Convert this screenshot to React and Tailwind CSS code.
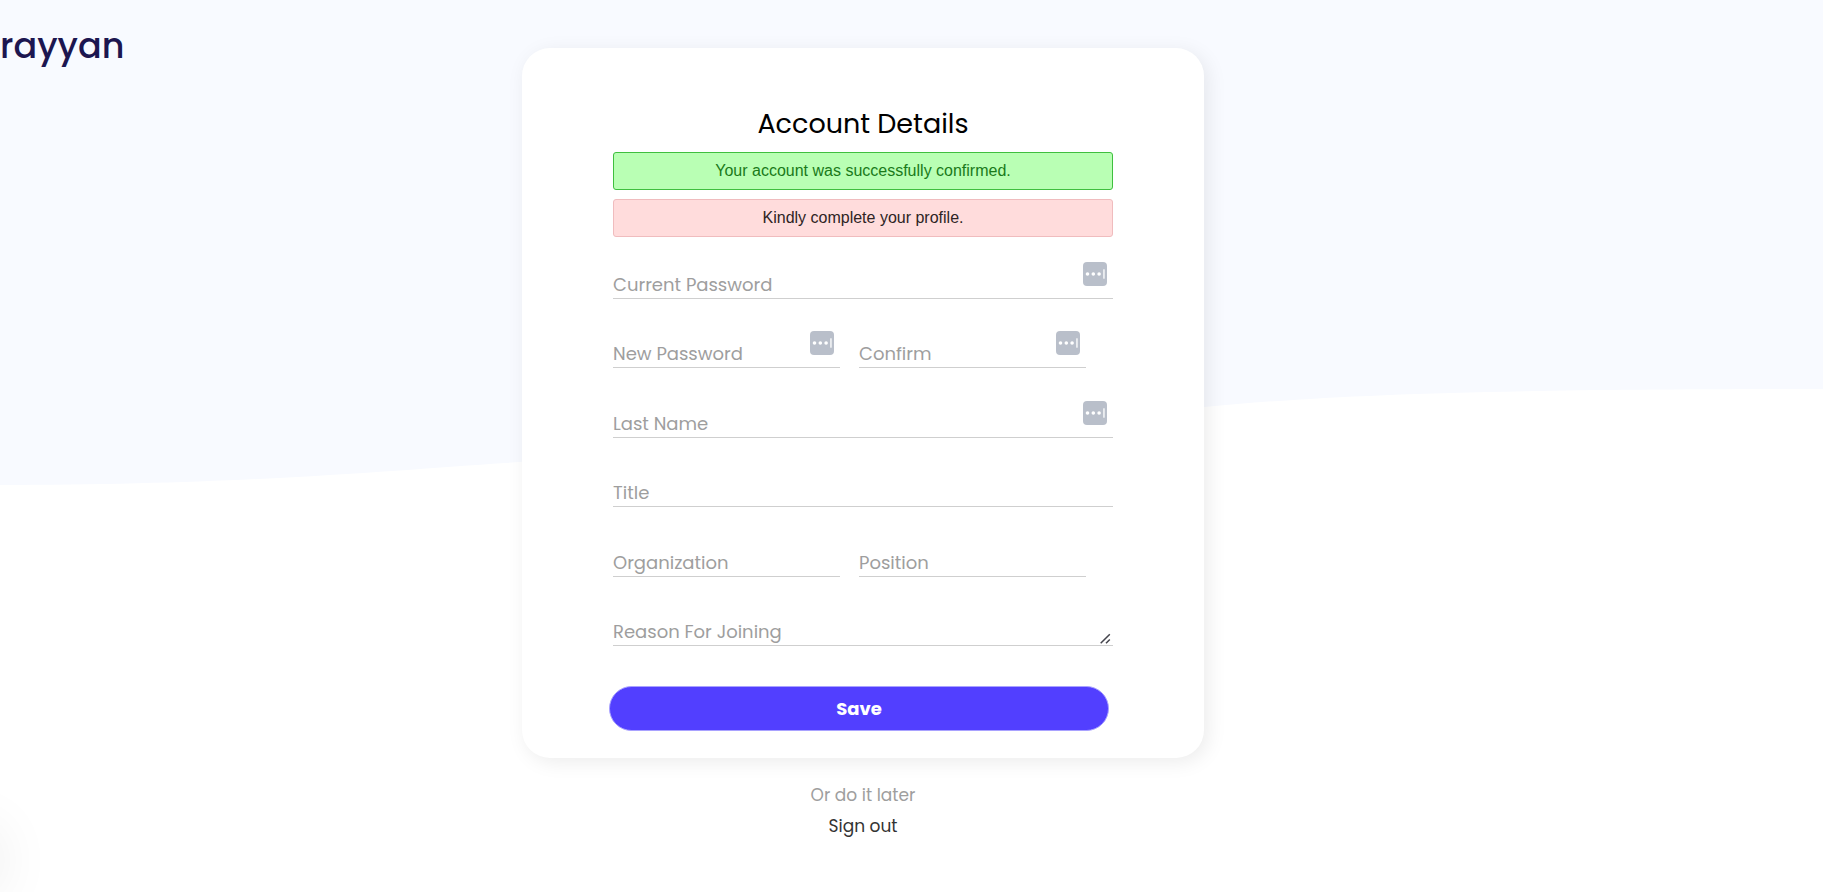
import React from "react";

const line = "border-0 border-b border-[#cfcfcf] bg-transparent outline-none";

function PasswordManagerIcon() {
  return (
    <svg
      className="absolute right-1.5 top-2 h-6 w-6"
      viewBox="0 0 24 24"
      aria-hidden="true"
    >
      <rect width="24" height="24" rx="4" fill="#b9bfca" />
      <circle cx="4.5" cy="12" r="1.8" fill="#fff" />
      <circle cx="10.3" cy="12" r="1.8" fill="#fff" />
      <circle cx="16.1" cy="12" r="1.8" fill="#fff" />
      <rect x="20.3" y="7.3" width="1.3" height="9.4" fill="#fff" />
    </svg>
  );
}

function ResizeHandle() {
  return (
    <svg
      className="pointer-events-none absolute bottom-0.5 right-0.5 h-[11px] w-[11px]"
      viewBox="0 0 11 11"
      aria-hidden="true"
    >
      <path
        d="M0.7 10.3L9.8 1.2M6 10.3L9.8 6.5"
        fill="none"
        stroke="#45454d"
        strokeWidth="1.5"
      />
    </svg>
  );
}

function Field({ id, label, type = "text", managed = false, multiline = false }) {
  return (
    <div className="relative h-[45px]">
      {multiline ? (
        <textarea
          id={id}
          rows={1}
          className={`block h-[45px] w-full resize pt-4 text-lg text-[#333] [&::-webkit-resizer]:hidden ${line}`}
        />
      ) : (
        <input
          id={id}
          type={type}
          className={`block h-[45px] w-full pt-4 text-lg text-[#333] ${line}`}
        />
      )}
      <label
        htmlFor={id}
        className="pointer-events-none absolute bottom-0 left-0 text-lg text-[#9e9e9e]"
      >
        {label}
      </label>
      {managed && <PasswordManagerIcon />}
      {multiline && <ResizeHandle />}
    </div>
  );
}

function Pair({ children }) {
  return <div className="grid grid-cols-2 gap-[19px] pr-[27px]">{children}</div>;
}

export default function App() {
  return (
    <div className="relative min-h-screen overflow-hidden bg-white font-['Poppins','Inter',sans-serif]">
      <svg
        className="absolute left-0 top-0 h-[485px] w-full"
        viewBox="0 0 1823 485"
        preserveAspectRatio="none"
        aria-hidden="true"
      >
        <path
          d="M0 0H1823V389C1500 389 1340 394 1204 407C1000 425 760 447 505 463C400 470 240 485 0 485Z"
          fill="#f8faff"
        />
      </svg>

      <a
        href="#home"
        className="absolute left-0 top-5 text-[35px] font-medium leading-[52px] text-[#1c1650]"
      >
        rayyan
      </a>

      <main className="relative flex flex-col items-center pr-[97px] pt-12 pb-8">
        <section className="w-full max-w-[682px] rounded-[28px] bg-white px-[91px] pb-[27px] pt-14 shadow-[4px_4px_20px_rgba(0,0,0,0.08)]">
          <h1 className="text-center text-[27px] leading-10 text-black">
            Account Details
          </h1>
          <div className="mt-2 flex flex-col gap-[9px] text-center font-['Liberation_Sans',Arial,sans-serif] text-base">
            <p
              role="status"
              className="rounded-[3px] border border-[#3fbf3f] bg-[#b9ffb4] py-1.5 text-[#1a7a1a]"
            >
              Your account was successfully confirmed.
            </p>
            <p
              role="alert"
              className="rounded-[3px] border border-[#f0bcbe] bg-[#ffdcdc] py-1.5 text-[#2e2424]"
            >
              Kindly complete your profile.
            </p>
          </div>

          <form
            className="mt-[17px]"
            onSubmit={(event) => event.preventDefault()}
          >
            <div className="flex h-[392px] flex-col justify-between">
              <Field id="current" label="Current Password" type="password" managed />
              <Pair>
                <Field id="new" label="New Password" type="password" managed />
                <Field id="confirm" label="Confirm" type="password" managed />
              </Pair>
              <Field id="last-name" label="Last Name" managed />
              <Field id="title" label="Title" />
              <Pair>
                <Field id="organization" label="Organization" />
                <Field id="position" label="Position" />
              </Pair>
              <Field id="reason" label="Reason For Joining" multiline />
            </div>
            <button
              type="submit"
              className="-ml-1 mt-10 block h-[45px] w-full rounded-full border border-[#a9a2ff] bg-[#523fff] text-lg font-bold text-white"
            >
              Save
            </button>
          </form>
        </section>

        <nav className="mt-[22px] flex flex-col items-center text-[17px] leading-[31px]">
          <a href="#later" className="text-[#9e9e9e]">
            Or do it later
          </a>
          <a href="#sign-out" className="text-[#333]">
            Sign out
          </a>
        </nav>
      </main>

      <div className="absolute -left-16 bottom-0 h-16 w-16 rounded-full shadow-[0_0_60px_rgba(0,0,0,0.09)]" />
    </div>
  );
}
